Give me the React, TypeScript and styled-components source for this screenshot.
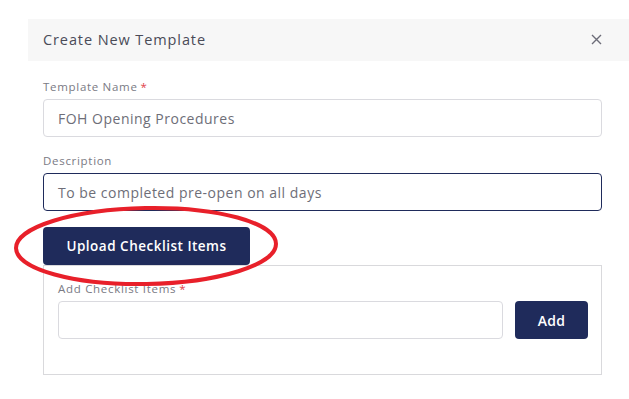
import styled, { createGlobalStyle } from "styled-components";

const GlobalStyle = createGlobalStyle`
  html, body {
    margin: 0;
    padding: 0;
    background: #ffffff;
    font-family: "Open Sans", "Liberation Sans", sans-serif;
    overflow: hidden;
  }
`;

const navy = "#1f2b5b";

const Page = styled.div`
  position: relative;
  width: 629px;
  height: 399px;
  padding-top: 19px;
  padding-left: 28px;
  box-sizing: border-box;
  overflow: hidden;
`;

const Modal = styled.div`
  width: 601px;
  background: #ffffff;
`;

const Header = styled.div`
  height: 42px;
  box-sizing: border-box;
  background: #f7f7f7;
  display: flex;
  align-items: center;
  justify-content: space-between;
  padding: 0 27px 2px 15px;
`;

const Title = styled.h3`
  margin: 0;
  font-size: 14.5px;
  font-weight: 400;
  color: #4a4b57;
  letter-spacing: 0.9px;
`;

const Close = styled.button`
  border: none;
  background: none;
  padding: 0;
  width: 12px;
  height: 12px;
  display: flex;
  align-items: center;
  justify-content: center;
  color: #6c6c78;
`;

const Body = styled.div`
  padding: 18px 27px 0 15px;
  display: flex;
  flex-direction: column;
`;

const Field = styled.div<{ $gap?: number }>`
  display: flex;
  flex-direction: column;
  margin-bottom: ${(p) => p.$gap ?? 0}px;
`;

const Label = styled.label`
  font-size: 11.5px;
  color: #7a7a84;
  line-height: 16px;
  margin-bottom: 4px;
  letter-spacing: 0.7px;
`;

const Star = styled.span`
  color: #e0424b;
  margin-left: 3px;
`;

const Input = styled.div<{ $focused?: boolean }>`
  flex: 1 1 auto;
  min-width: 0;
  height: 38px;
  box-sizing: border-box;
  border: 1px solid ${(p) => (p.$focused ? navy : "#dadadf")};
  border-radius: 4px;
  padding: 0 14px;
  display: flex;
  align-items: center;
  font-size: 14px;
  color: #6e6e78;
  letter-spacing: 0.5px;
`;

const UploadButton = styled.button`
  align-self: flex-start;
  width: 207px;
  height: 38px;
  border: none;
  border-radius: 4px;
  background: ${navy};
  color: #ffffff;
  font-family: inherit;
  font-size: 13.5px;
  font-weight: 600;
  letter-spacing: 0.5px;
`;

const ItemsBox = styled.div`
  border: 1px solid #d9d9dc;
  height: 110px;
  box-sizing: border-box;
  padding: 15px 13px 0 14px;
`;

const Row = styled.div`
  display: flex;
  gap: 12px;
`;

const AddButton = styled.button`
  width: 73px;
  height: 38px;
  border: none;
  border-radius: 4px;
  background: ${navy};
  color: #ffffff;
  font-family: inherit;
  font-size: 14px;
  font-weight: 600;
  letter-spacing: 0.3px;
`;

const Annotation = styled.svg`
  position: absolute;
  left: 0;
  top: 0;
  pointer-events: none;
`;

export default function App() {
  return (
    <>
      <GlobalStyle />
      <Page>
        <Modal>
          <Header>
            <Title>Create New Template</Title>
            <Close aria-label="close">
              <svg width="11" height="11" viewBox="0 0 11 11">
                <path d="M1 1L10 10M10 1L1 10" stroke="currentColor" strokeWidth="1.4" />
              </svg>
            </Close>
          </Header>
          <Body>
            <Field $gap={16}>
              <Label>
                Template Name<Star>*</Star>
              </Label>
              <Input>FOH Opening Procedures</Input>
            </Field>
            <Field $gap={16}>
              <Label>Description</Label>
              <Input $focused>To be completed pre-open on all days</Input>
            </Field>
            <UploadButton>Upload Checklist Items</UploadButton>
            <ItemsBox>
              <Field>
                <Label>
                  Add Checklist Items<Star>*</Star>
                </Label>
                <Row>
                  <Input />
                  <AddButton>Add</AddButton>
                </Row>
              </Field>
            </ItemsBox>
          </Body>
        </Modal>
        <Annotation width="629" height="399">
          <ellipse
            cx="146"
            cy="246"
            rx="130"
            ry="38"
            fill="none"
            stroke="#e8202a"
            strokeWidth="4"
            transform="rotate(-1 146 246)"
          />
        </Annotation>
      </Page>
    </>
  );
}
